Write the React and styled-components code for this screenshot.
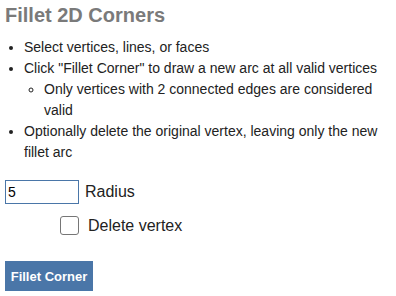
import React from "react";
import styled, { createGlobalStyle } from "styled-components";

const Global = createGlobalStyle`
  body { margin: 0; background: #fff; font-family: "Liberation Sans", Arial, sans-serif; color: #222; }
`;

const Panel = styled.div`
  padding: 3px 5px;
`;

const Title = styled.h3`
  margin: 0 0 10px 0;
  font-size: 20px;
  font-weight: bold;
  color: #7a7a7a;
  line-height: 24px;
`;

const List = styled.ul`
  margin: 0;
  padding-left: ${(p) => (p.$nested ? "20px" : "19px")};
  list-style-type: ${(p) => (p.$nested ? "circle" : "disc")};
  font-size: 14px;
  line-height: 21px;
`;

const Item = styled.li``;

const Form = styled.div`
  margin-top: 17px;
  display: flex;
  flex-direction: column;
  gap: 12px;
`;

const Row = styled.div`
  display: flex;
  align-items: center;
  gap: 6px;
  padding-left: ${(p) => p.$indent || 0}px;
`;

const TextInput = styled.input`
  width: 74px;
  height: 24px;
  box-sizing: border-box;
  border: 1px solid #4a76a8;
  padding: 0 2px;
  font-family: "Liberation Sans", Arial, sans-serif;
  font-size: 14px;
  outline: none;
`;

const Label = styled.span`
  font-size: 16px;
  color: #222;
`;

const Box = styled.span`
  width: 19px;
  height: 19px;
  box-sizing: border-box;
  border: 1px solid #767676;
  border-radius: 3px;
  background: #fff;
  display: inline-block;
  margin-right: 3px;
`;

const Button = styled.button`
  margin-top: 14px;
  align-self: flex-start;
  background: #4a76a8;
  color: #fff;
  border: none;
  font-family: "Liberation Sans", Arial, sans-serif;
  font-weight: bold;
  font-size: 13px;
  width: 88px;
  height: 30px;
  padding: 0;
`;

export default function App() {
  return (
    <>
      <Global />
      <Panel>
        <Title>Fillet 2D Corners</Title>
        <List>
          <Item>Select vertices, lines, or faces</Item>
          <Item>
            Click "Fillet Corner" to draw a new arc at all valid vertices
            <List $nested>
              <Item>Only vertices with 2 connected edges are considered valid</Item>
            </List>
          </Item>
          <Item>Optionally delete the original vertex, leaving only the new fillet arc</Item>
        </List>
        <Form>
          <Row>
            <TextInput defaultValue="5" />
            <Label>Radius</Label>
          </Row>
          <Row $indent={55}>
            <Box />
            <Label>Delete vertex</Label>
          </Row>
          <Button>Fillet Corner</Button>
        </Form>
      </Panel>
    </>
  );
}
